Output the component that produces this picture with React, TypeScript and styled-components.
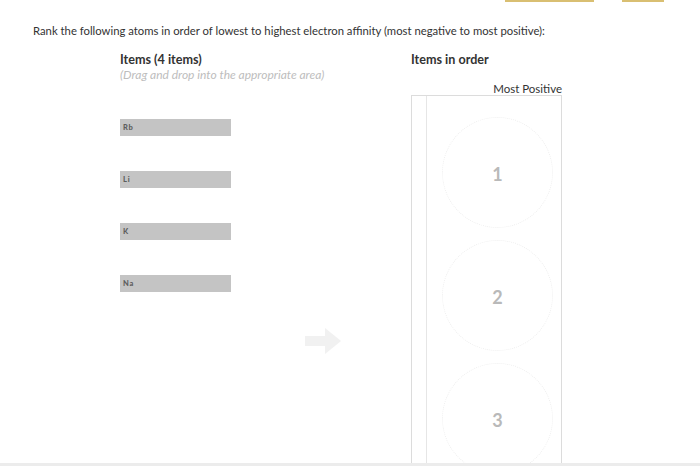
import styled, { createGlobalStyle } from 'styled-components';

const GlobalStyle = createGlobalStyle`
  body {
    margin: 0;
    background: #fff;
    font-family: Lato, "Open Sans", sans-serif;
    color: #333;
  }
`;

const App = () => {
  const items = ['Rb', 'Li', 'K', 'Na'];
  const slots = [1, 2, 3];

  return (
    <>
      <GlobalStyle />
      <Page>
        <TopBar>
          <Tab $width={89} />
          <Tab $width={42} />
        </TopBar>
        <Prompt>
          Rank the following atoms in order of lowest to highest electron
          affinity (most negative to most positive):
        </Prompt>
        <Columns>
          <SourceColumn>
            <Heading>Items (4 items)</Heading>
            <Hint>(Drag and drop into the appropriate area)</Hint>
            <ItemList>
              {items.map((item) => (
                <Item key={item}>{item}</Item>
              ))}
            </ItemList>
            <Arrow viewBox="0 0 36 26">
              <path d="M0 8h20V0l16 13-16 13v-8H0z" fill="#f1f1f1" />
            </Arrow>
          </SourceColumn>
          <TargetColumn>
            <Heading>Items in order</Heading>
            <EndLabel>Most Positive</EndLabel>
            <DropBox>
              <Rail />
              <SlotList>
                {slots.map((n) => (
                  <Slot key={n}>{n}</Slot>
                ))}
              </SlotList>
            </DropBox>
          </TargetColumn>
        </Columns>
      </Page>
      <Footer />
    </>
  );
};

export default App;

const Page = styled.div`
  height: 463px;
  overflow: hidden;
`;

const TopBar = styled.div`
  display: flex;
  justify-content: flex-end;
  gap: 28px;
  padding-right: 36px;
`;

const Tab = styled.div<{ $width: number }>`
  width: ${(p) => p.$width}px;
  height: 2px;
  background-color: #d9bf72;
`;

const Prompt = styled.p`
  margin: 22px 0 0 33px;
  font-size: 11.3px;
  line-height: 14px;
  color: #333;
`;

const Columns = styled.div`
  display: flex;
  margin-top: 14px;
  padding-left: 120px;
`;

const SourceColumn = styled.div`
  width: 291px;
  display: flex;
  flex-direction: column;
`;

const TargetColumn = styled.div`
  width: 151px;
  display: flex;
  flex-direction: column;
`;

const Heading = styled.h3`
  margin: 0;
  font-size: 12.6px;
  line-height: 15px;
  font-weight: 700;
  color: #333;
`;

const Hint = styled.p`
  margin: 1px 0 0;
  font-size: 12px;
  line-height: 14px;
  font-style: italic;
  color: #bdbdbd;
`;

const ItemList = styled.ul`
  list-style: none;
  margin: 37px 0 0;
  padding: 0;
  display: flex;
  flex-direction: column;
  gap: 35px;
`;

const Item = styled.li`
  width: 111px;
  height: 17px;
  box-sizing: border-box;
  padding-left: 3px;
  background-color: #c4c4c4;
  font-size: 7.5px;
  font-weight: 900;
  letter-spacing: 0.8px;
  line-height: 17px;
  color: #5e5e5e;
`;

const Arrow = styled.svg`
  width: 36px;
  height: 26px;
  margin: 36px 0 0 185px;
`;

const EndLabel = styled.div`
  margin-top: 16px;
  text-align: right;
  font-size: 11.5px;
  line-height: 12px;
  color: #333;
`;

const DropBox = styled.div`
  display: flex;
  height: 420px;
  border: 1px solid #dcdcdc;
  border-bottom: none;
`;

const Rail = styled.div`
  width: 14px;
  border-right: 1px solid #e6e6e6;
`;

const SlotList = styled.div`
  flex: 1;
  display: flex;
  flex-direction: column;
  gap: 12px;
  padding: 21px 8px 0 15px;
`;

const Slot = styled.div`
  width: 111px;
  height: 111px;
  box-sizing: border-box;
  border: 1px dotted #efefef;
  border-radius: 50%;
  display: flex;
  align-items: center;
  justify-content: center;
  padding-top: 2px;
  font-size: 18px;
  font-weight: 700;
  color: #b9b9b9;
`;

const Footer = styled.div`
  height: 3px;
  background-color: #ececec;
`;
